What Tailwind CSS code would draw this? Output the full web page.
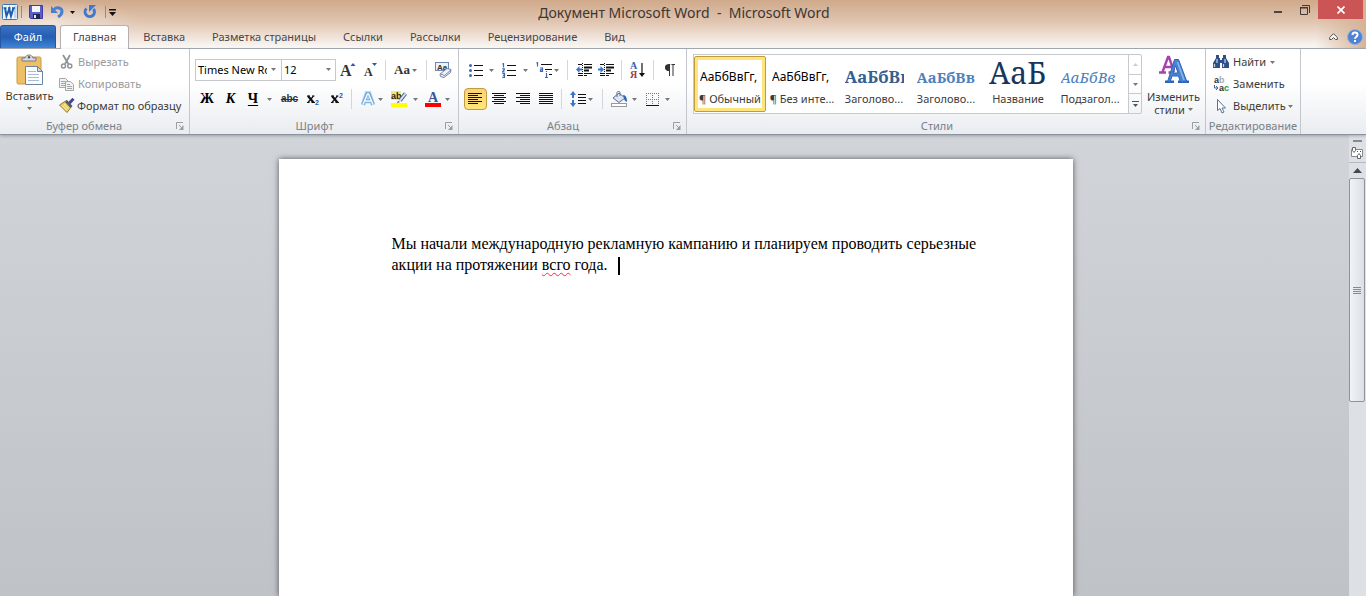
<!DOCTYPE html>
<html lang="ru">
<head>
<meta charset="utf-8">
<meta name="viewport" content="width=device-width, initial-scale=1">
<title>Документ Microsoft Word - Microsoft Word</title>
<script src="https://cdn.jsdelivr.net/npm/@tailwindcss/browser@4"></script>
</head>
<body class="flex h-screen flex-col overflow-hidden bg-[#c4c8cd] font-['Noto_Sans','Open_Sans',sans-serif] text-[11px] leading-4 text-[#3b3b3b]">

<svg class="hidden" aria-hidden="true">
  <symbol id="down" viewBox="0 0 5 3"><path d="M0 0h5L2.500 3z" fill="#777"/></symbol>
  <symbol id="launch" viewBox="0 0 8 8"><path d="M.5 7V.5H7M3 3l3 3" fill="none" stroke="#9a9da2"/><path d="M7.500 3v5H3l4.500-5z" fill="#9a9da2"/></symbol>
</svg>

<header class="shrink-0 border-b border-[#a9adb4] bg-[radial-gradient(ellipse_90px_22px_at_50px_22px,#ffffff80,#ffffff00),linear-gradient(to_left,#d5b397_0,#d5b39700_50px),linear-gradient(#cfa98a,#e0c5b0_45%,#fbf8f6)]">
  <div class="flex h-[25px] items-start">
    <div class="flex h-6 flex-1 items-center pl-0.5">
      <svg class="h-4 w-4" viewBox="0 0 16 16"><rect x=".5" y=".5" width="15" height="15" rx="1" fill="#eef5fc" stroke="#3b78b8"/><path d="M12 2h2.500v12H12z" fill="#b9d6f2"/><path d="M1.500 4h3M6 4h2.500M10 4h3" stroke="#1f5ba8" stroke-width="1.500"/><path d="M3 4l1.500 8L7.300 5l1.700 7L11.500 4" fill="none" stroke="#1f5ba8" stroke-width="2"/></svg>
      <span class="ml-[3px] h-3 w-px bg-[#9d8a7d]"></span>
      <button aria-label="Сохранить" class="ml-[7px]"><svg class="h-[14px] w-[14px]" viewBox="0 0 14 14"><path d="M.5.5h13v13h-12l-1-1z" fill="#5a5fc8" stroke="#3c3f9c"/><path d="M3 1h8v6H3z" fill="#f3f6ff"/><path d="M4 9h7v5H4z" fill="#23264f"/><path d="M5 10h2v3H5z" fill="#e8e8f4"/></svg></button>
      <button aria-label="Отменить" class="ml-2"><svg class="h-[14px] w-[14px]" viewBox="0 0 14 14"><path d="M3 4.500c3-3 8-1.500 8 2 0 2.500-1.500 4-4 5.500" fill="none" stroke="#4a7fd0" stroke-width="3"/><path d="M0 1v7h7z" fill="#4a7fd0"/></svg></button>
      <button aria-label="Список отмены" class="ml-[5px]"><svg class="h-[3px] w-[5px]" viewBox="0 0 5 3"><path d="M0 0h5L2.500 3z" fill="#111"/></svg></button>
      <button aria-label="Вернуть" class="ml-2"><svg class="h-[14px] w-[14px]" viewBox="0 0 14 14"><path d="M3.500 3.500a4.700 4.700 0 1 0 7 .5" fill="none" stroke="#3f78d2" stroke-width="3"/><path d="M6 0h7L6 7z" fill="#3f78d2"/></svg></button>
      <span class="ml-2 h-3 w-px bg-[#9d8a7d]"></span>
      <button aria-label="Настройка панели быстрого доступа" class="ml-[3px]"><svg class="h-[7px] w-[7px]" viewBox="0 0 7 7"><path d="M0 0h7v1.500H0zM0 3h7L3.500 7z" fill="#111"/></svg></button>
    </div>
    <h1 class="whitespace-pre pt-[3px] text-[14px] leading-5 text-[#3c3634]">Документ Microsoft Word  -  Microsoft Word</h1>
    <div class="flex flex-1 items-start justify-end">
      <button aria-label="Свернуть" class="flex h-5 w-[26px] items-center justify-center"><svg class="h-[14px] w-[8px]" viewBox="0 0 8 14"><path d="M0 8h8v2H0z" fill="#4a4542"/></svg></button>
      <button aria-label="Развернуть" class="flex h-[19px] w-[27px] items-center justify-center"><svg class="h-[10px] w-[10px]" viewBox="0 0 10 10"><path d="M2 .5h7.500V8M.5 2.500h7v7h-7z" fill="none" stroke="#3f3a38"/><path d="M0 2h8v1.500H0z" fill="#3f3a38"/></svg></button>
      <button aria-label="Закрыть" class="mr-[3px] flex h-[19px] w-[45px] items-center justify-center bg-[#cb5454]"><svg class="h-2 w-2" viewBox="0 0 8 8"><path d="M.5.5l7 7M7.500.5l-7 7" stroke="#fff" stroke-width="1.700"/></svg></button>
    </div>
  </div>
  <nav class="flex h-[23px] text-[#474747]">
    <button class="mr-1 w-14 rounded-t-[3px] border border-b-0 border-[#2458a4] bg-linear-to-b from-[#3a72c4] via-[#255db2] to-[#3f86d8] text-white">Файл</button>
    <button class="-mb-px h-6 rounded-t-[3px] border border-b-0 border-[#b5b0ae] bg-white px-3 pb-px">Главная</button>
    <button class="pr-[13px] pl-[14px]">Вставка</button>
    <button class="pr-[13px] pl-[14px]">Разметка страницы</button>
    <button class="pr-[13px] pl-[14px]">Ссылки</button>
    <button class="pr-[13px] pl-[14px]">Рассылки</button>
    <button class="pr-[13px] pl-[14px]">Рецензирование</button>
    <button class="pr-[13px] pl-[14px]">Вид</button>
    <div class="ml-auto flex items-center gap-[9px] pr-[3px]">
      <button aria-label="Свернуть ленту"><svg class="h-[7px] w-[9px]" viewBox="0 0 9 7"><path d="M4.500.7L8.300 4.500v2H6.500l-2-2-2 2H.7v-2z" fill="#fff" stroke="#4c4c4c"/></svg></button>
      <button aria-label="Справка"><svg class="h-4 w-4" viewBox="0 0 16 16"><circle cx="8" cy="8" r="7.500" fill="#4f83d4" stroke="#8fb0e2"/><path d="M5.500 6c0-3.200 5-3.200 5 0 0 1.700-2.500 1.700-2.500 3.800M8 11v2" fill="none" stroke="#fff" stroke-width="2"/></svg></button>
    </div>
  </nav>
</header>

<main class="contents">
<div class="z-10 flex h-[86px] shrink-0 border-b border-[#8b939d] bg-linear-to-b from-white from-40% to-[#e9ecf0] shadow-[0_1px_3px_#00000040]">

  <section class="flex w-[190px] shrink-0 flex-col border-r border-[#c3c7cd]">
    <div class="flex h-[70px] pt-[2px]">
      <button class="flex w-[59px] flex-col items-center pt-[3px]">
        <svg class="h-8 w-[28px]" viewBox="0 0 28 32"><rect x="1" y="3" width="24" height="27" rx="1.500" fill="#efbf68" stroke="#c99845"/><path d="M6 7V4h3c1-4 7-4 8 0h3v3z" fill="#d9dbdf" stroke="#777b82"/><circle cx="13" cy="3.200" r="1.200" fill="#555"/><path d="M9.500 12.500h12l5 5v13h-17z" fill="#fafcff" stroke="#6d83a3"/><path d="M21.500 12.500v5h5z" fill="#cbd9ec" stroke="#6d83a3"/><path d="M12 17.500h8M12 20.500h11M12 23.500h11M12 26.500h11" stroke="#a9bad2"/></svg>
        <span class="mt-[2px]">Вставить</span>
        <svg class="mt-[3px] h-[3px] w-[5px]"><use href="#down"/></svg>
      </button>
      <div class="flex flex-col">
        <button disabled class="flex h-[22px] items-center gap-[3px] text-[#9a9a9a]"><svg class="h-4 w-4" viewBox="0 0 16 16" fill="none" stroke="#8f9499"><path d="M4 1l5.500 9M11 1L6 10" stroke-width="1.800"/><circle cx="4.500" cy="12" r="2" stroke-width="1.500"/><circle cx="10.800" cy="12" r="2" stroke-width="1.500"/></svg>Вырезать</button>
        <button disabled class="flex h-[22px] items-center gap-[3px] text-[#9a9a9a]"><svg class="h-4 w-4" viewBox="0 0 16 16" fill="#f1f1f1" stroke="#a6a6a6"><path d="M.5 2.500h6l3 3v6h-9z"/><path d="M2 5.500h4M2 7.500h4M2 9.500h4"/><path d="M6.500 5.500h5l3 3v6h-8z"/><path d="M8 8.500h3M8 10.500h5M8 12.500h5"/></svg>Копировать</button>
        <button class="flex h-[22px] items-center gap-0.5 whitespace-nowrap"><svg class="h-4 w-4" viewBox="0 0 16 16"><path d="M14.500.8L10 5.500" stroke="#4a4690" stroke-width="3"/><path d="M.5 7l7-4.500 5 6L8 14.500z" fill="#e8cf62" stroke="#94792d"/><path d="M6 4l2-2 5.500 6-2 2z" fill="#555b6b"/><path d="M3 7.500l5 5M5 6l4.500 5" stroke="#fff4b4"/></svg>Формат по образцу</button>
      </div>
    </div>
    <div class="flex items-center text-[#7b7f86]"><h2 class="flex-1 pr-2 text-center">Буфер обмена</h2><button aria-label="Параметры буфера обмена" class="mr-[5px]"><svg class="h-2 w-2"><use href="#launch"/></svg></button></div>
  </section>

  <section class="flex w-[269px] shrink-0 flex-col border-r border-[#c3c7cd]">
    <div class="flex h-[70px] flex-col gap-[7px] pt-[10px] pl-[5px]">
      <div class="flex h-[22px] items-center">
        <div class="relative"><select aria-label="Шрифт" class="block h-[22px] w-[87px] appearance-none border border-[#c6c9ce] bg-white pr-[14px] pl-0.5 text-black"><option>Times New Roman</option></select><svg class="pointer-events-none absolute top-[9px] right-1.5 h-[3px] w-[5px]"><use href="#down"/></svg></div>
        <div class="relative -ml-px"><select aria-label="Размер шрифта" class="block h-[22px] w-[55px] appearance-none border border-[#c6c9ce] bg-white pr-[14px] pl-0.5 text-black"><option>12</option></select><svg class="pointer-events-none absolute top-[9px] right-[5px] h-[3px] w-[5px]"><use href="#down"/></svg></div>
        <button aria-label="Увеличить размер" class="flex h-[22px] w-6 items-center justify-center"><svg class="h-4 w-4" viewBox="0 0 16 16"><text x="0" y="14" font-family="Liberation Serif" font-weight="700" font-size="16" fill="#333">A</text><path d="M10.500 4h5L13 1z" fill="#2f56b0"/></svg></button>
        <button aria-label="Уменьшить размер" class="flex h-[22px] w-[22px] items-center justify-center"><svg class="h-4 w-4" viewBox="0 0 16 16"><text x="1" y="14" font-family="Liberation Serif" font-weight="700" font-size="12" fill="#333">A</text><path d="M9 1h5l-2.500 3z" fill="#2f56b0"/></svg></button>
        <span class="ml-[3px] h-5 w-px bg-[#d3d6da]"></span>
        <button aria-label="Регистр" class="ml-2 flex h-[22px] items-center gap-0.5 font-['Liberation_Serif',serif] text-[13px] font-bold text-[#333]">Aa<svg class="h-[3px] w-[5px]"><use href="#down"/></svg></button>
        <span class="ml-[9px] h-5 w-px bg-[#d3d6da]"></span>
        <button aria-label="Очистить формат" class="ml-2 flex h-[22px] items-center"><svg class="h-4 w-[17px]" viewBox="0 0 17 16"><rect x=".5" y=".5" width="13" height="8" fill="#edf3fb" stroke="#6f86b0"/><text x="2" y="7.500" font-family="Liberation Sans" font-weight="700" font-size="8" fill="#333">Aa</text><path d="M5 12l7-5.500 4 1-.500 3L9 15.500l-3.500-1z" fill="#eef1f7" stroke="#7483a5"/><path d="M6 12l3.500 1.500L16 8" fill="none" stroke="#7483a5"/></svg></button>
      </div>
      <div class="flex h-[22px] items-center font-['Liberation_Serif',serif] text-[14px] font-bold text-black">
        <button aria-label="Полужирный" class="h-[22px] w-6">Ж</button>
        <button aria-label="Курсив" class="h-[22px] w-[23px] italic">К</button>
        <button aria-label="Подчеркнутый" class="flex h-[22px] w-[36px] items-center justify-center gap-[9px]"><span class="underline underline-offset-2">Ч</span><svg class="h-[3px] w-[5px]"><use href="#down"/></svg></button>
        <button aria-label="Зачеркнутый" class="h-[22px] w-[23px] font-['Liberation_Sans',sans-serif] text-[10px] font-bold text-[#333] line-through">abc</button>
        <button aria-label="Подстрочный" class="flex h-[22px] w-6 items-center justify-center"><svg class="h-[14px] w-[14px]" viewBox="0 0 14 14"><path d="M1 4h3M6 4h2.500M1 10.500h2.500M5.500 10.500h3.500" stroke="#111" stroke-width="1.200"/><path d="M2 4l5.500 6.500" stroke="#111" stroke-width="2.200"/><path d="M7.500 4L2 10.500" stroke="#111" stroke-width="1.200"/><text x="9" y="13" font-family="Liberation Sans" font-size="7" font-weight="700" fill="#2f56b0">2</text></svg></button>
        <button aria-label="Надстрочный" class="flex h-[22px] w-[23px] items-center justify-center"><svg class="h-[14px] w-[14px]" viewBox="0 0 14 14"><path d="M1 4h3M6 4h2.500M1 10.500h2.500M5.500 10.500h3.500" stroke="#111" stroke-width="1.200"/><path d="M2 4l5.500 6.500" stroke="#111" stroke-width="2.200"/><path d="M7.500 4L2 10.500" stroke="#111" stroke-width="1.200"/><text x="9" y="6" font-family="Liberation Sans" font-size="7" font-weight="700" fill="#2f56b0">2</text></svg></button>
        <span class="ml-[3px] h-5 w-px bg-[#d3d6da]"></span>
        <button aria-label="Текстовые эффекты" class="ml-2 flex h-[22px] items-center gap-0.5"><svg class="h-4 w-4" viewBox="0 0 16 16"><path d="M3 14L7 2.500h2L13 14M5 10h6" fill="none" stroke="#b9dcf5" stroke-width="5"/><path d="M3 13.500L7 3h2l4 10.500M5 10h6" fill="none" stroke="#6ea6da" stroke-width="3.400"/><path d="M3 13.500L7.500 3h1L13 13.500M5 10h6" fill="none" stroke="#f3f9ff" stroke-width="1.500"/></svg><svg class="h-[3px] w-[5px]"><use href="#down"/></svg></button>
        <button aria-label="Цвет выделения" class="ml-2 flex h-[22px] items-center gap-1.5"><svg class="h-4 w-4" viewBox="0 0 16 16"><path d="M0 0h10v9H0z" fill="#f2ea71"/><text x="0" y="8" font-family="Liberation Sans" font-size="9" font-weight="700" fill="#222">ab</text><path d="M14.500 2.500L9 9.500" stroke="#536b95" stroke-width="4"/><path d="M14.500 2.500L9 9.500" stroke="#d8e3f2" stroke-width="2"/><path d="M9 11l-2-1-1 2z" fill="#444"/><path d="M0 12h16v4H0z" fill="#ff0"/></svg><svg class="h-[3px] w-[5px]"><use href="#down"/></svg></button>
        <button aria-label="Цвет текста" class="ml-[7px] flex h-[22px] items-center gap-1"><svg class="h-4 w-4" viewBox="0 0 16 16"><text x="3" y="11" font-family="Liberation Serif" font-size="14" font-weight="700" fill="#34549c">A</text><path d="M0 12h16v4H0z" fill="#f00"/></svg><svg class="h-[3px] w-[5px]"><use href="#down"/></svg></button>
      </div>
    </div>
    <div class="flex items-center text-[#7b7f86]"><h2 class="flex-1 pr-[6px] text-center">Шрифт</h2><button aria-label="Параметры шрифта" class="mr-[5px]"><svg class="h-2 w-2"><use href="#launch"/></svg></button></div>
  </section>

  <section class="flex w-[228px] shrink-0 flex-col border-r border-[#c3c7cd]">
    <div class="flex h-[70px] flex-col gap-[7px] pt-[10px] pl-[5px]">
      <div class="flex h-[22px] items-center">
        <button aria-label="Маркеры" class="ml-[5px] flex h-[22px] items-center gap-1.5"><svg class="h-[14px] w-[14px]" viewBox="0 0 14 14"><path d="M5 2.500h9M5 7.500h9M5 12.500h9" stroke="#111"/><g fill="#3c66b4"><circle cx="1.500" cy="2.500" r="1.500"/><circle cx="1.500" cy="7.500" r="1.500"/><circle cx="1.500" cy="12.500" r="1.500"/></g></svg><svg class="h-[3px] w-[5px]"><use href="#down"/></svg></button>
        <button aria-label="Нумерация" class="ml-2 flex h-[22px] items-center gap-[7px]"><svg class="h-[15px] w-[14px]" viewBox="0 0 14 15"><path d="M5 2.500h9M5 7.500h9M5 12.500h9" stroke="#111"/><g fill="none" stroke="#3c66b4" stroke-width="1.200"><path d="M.5 1.200l1-.700v4M.3 5.800h2v1L.3 9h2.500M.3 10.600h2.200v3.800H.3M1 12.500h1.500"/></g></svg><svg class="h-[3px] w-[5px]"><use href="#down"/></svg></button>
        <button aria-label="Многоуровневый список" class="ml-2 flex h-[22px] items-center gap-0.5"><svg class="h-4 w-4" viewBox="0 0 16 16"><path d="M5 2.500h11M9 7.500h7M13 12.500h3" stroke="#111"/><g fill="none" stroke="#3c66b4" stroke-width="1.200"><path d="M.5 1.200l1-.7v4M4 6h2.500v3.500h-2V7.800h2M10.500 11v4.500M9 15.500h3M10.500 9v1"/></g></svg><svg class="h-[3px] w-[5px]"><use href="#down"/></svg></button>
        <span class="ml-2 h-5 w-px bg-[#d3d6da]"></span>
        <button aria-label="Уменьшить отступ" class="ml-2 flex h-[22px] items-center"><svg class="h-[14px] w-4" viewBox="0 0 16 14"><path d="M2 1.500h4M8 1.500h8M2 10.500h4M8 10.500h8M2 12.500h4M8 12.500h3" stroke="#111"/><path d="M8 4.500h8M8 7.500h5" stroke="#111" stroke-width="2"/><path d="M6.500 0v14" stroke="#111" stroke-dasharray="1 1"/><path d="M0 6.500L3.500 3v2.500H6v2H3.500V10z" fill="#3c74cc"/></svg></button>
        <button aria-label="Увеличить отступ" class="ml-1.5 flex h-[22px] items-center"><svg class="h-[14px] w-4" viewBox="0 0 16 14"><path d="M2 1.500h4M8 1.500h8M2 10.500h4M8 10.500h8M2 12.500h4M8 12.500h3" stroke="#111"/><path d="M8 4.500h8M8 7.500h5" stroke="#111" stroke-width="2"/><path d="M6.500 0v14" stroke="#111" stroke-dasharray="1 1"/><path d="M6 6.500L2.500 3v2.500H0v2h2.500V10z" fill="#3c74cc"/></svg></button>
        <span class="ml-[7px] h-5 w-px bg-[#d3d6da]"></span>
        <button aria-label="Сортировка" class="ml-2 flex h-[22px] items-center"><svg class="h-[18px] w-[15px]" viewBox="0 0 15 18"><text x="0" y="8" font-family="Liberation Serif" font-size="10" font-weight="700" fill="#3c5ca8">А</text><text x="0" y="17" font-family="Liberation Serif" font-size="10" font-weight="700" fill="#a13d3d">Я</text><path d="M12 2v10" stroke="#111" stroke-width="1.200"/><path d="M9 12h6l-3 4z" fill="#111"/></svg></button>
        <span class="ml-2 h-5 w-px bg-[#d3d6da]"></span>
        <button aria-label="Отобразить все знаки" class="ml-[11px] flex h-[22px] items-center"><svg class="h-3 w-[10px]" viewBox="0 0 10 12"><path d="M5 0v12H4V7C-1.500 7-1.500 0 4 0h6v1H8.500v11h-1V1z" fill="#333"/></svg></button>
      </div>
      <div class="flex h-[22px] items-center">
        <button aria-label="По левому краю" aria-pressed="true" class="flex h-[22px] w-[23px] items-center justify-center rounded-sm border border-[#c29b3c] bg-linear-to-b from-[#fbd277] to-[#ffe67a]"><svg class="h-3 w-[15px]" viewBox="0 0 15 12"><path d="M0 .5h14M0 2.500h10M0 4.500h14M0 6.500h10M0 8.500h14M0 10.500h10" stroke="#111"/></svg></button>
        <button aria-label="По центру" class="flex h-[22px] w-6 items-center justify-center"><svg class="h-3 w-[14px]" viewBox="0 0 14 12"><path d="M0 .5h14M2 2.500h10M0 4.500h14M2 6.500h10M0 8.500h14M2 10.500h10" stroke="#111"/></svg></button>
        <button aria-label="По правому краю" class="flex h-[22px] w-6 items-center justify-center"><svg class="h-3 w-[14px]" viewBox="0 0 14 12"><path d="M0 .5h14M4 2.500h10M0 4.500h14M4 6.500h10M0 8.500h14M4 10.500h10" stroke="#111"/></svg></button>
        <button aria-label="По ширине" class="flex h-[22px] w-[22px] items-center justify-center"><svg class="h-3 w-[14px]" viewBox="0 0 14 12"><path d="M0 .5h14M0 2.500h14M0 4.500h14M0 6.500h14M0 8.500h14M0 10.500h14" stroke="#111"/></svg></button>
        <span class="ml-1 h-5 w-px bg-[#d3d6da]"></span>
        <button aria-label="Интервал" class="ml-2 flex h-[22px] items-center gap-0.5"><svg class="h-4 w-4" viewBox="0 0 16 16"><path d="M8 3.500h8M8 6.500h8M8 9.500h8M8 12.500h8" stroke="#111"/><path d="M3 0l3 4H4v3H2V4H0zM3 16l3-4H4V9H2v3H0z" fill="#3c74cc"/></svg><svg class="h-[3px] w-[5px]"><use href="#down"/></svg></button>
        <span class="ml-[9px] h-5 w-px bg-[#d3d6da]"></span>
        <button aria-label="Заливка" class="ml-2 flex h-[22px] items-center gap-1"><svg class="h-4 w-[17px]" viewBox="0 0 17 16"><path d="M2 7l6-5 6 5-6 4.500z" fill="#dbe6f5" stroke="#5b6f93"/><path d="M6 6V1.500c0-1.500 3-1.500 3 0V5" fill="none" stroke="#5b6f93"/><path d="M12 4c3 0 4 3 4 7-2-1-3-2-3-4z" fill="#2f62b4"/><rect x=".5" y="12.500" width="15" height="3" fill="#fff" stroke="#999"/></svg><svg class="h-[3px] w-[5px]"><use href="#down"/></svg></button>
        <button aria-label="Границы" class="ml-[9px] flex h-[22px] items-center gap-1.5"><svg class="h-[13px] w-[13px]" viewBox="0 0 13 13"><path d="M0 .5h13M0 6.500h13M.5 0v13M6.500 0v13M12.500 0v13" stroke="#777" stroke-dasharray="1 1"/><path d="M0 12.500h13" stroke="#111"/></svg><svg class="h-[3px] w-[5px]"><use href="#down"/></svg></button>
      </div>
    </div>
    <div class="flex items-center text-[#7b7f86]"><h2 class="flex-1 pr-[6px] text-center">Абзац</h2><button aria-label="Параметры абзаца" class="mr-[5px]"><svg class="h-2 w-2"><use href="#launch"/></svg></button></div>
  </section>

  <section class="flex w-[519px] shrink-0 flex-col border-r border-[#c3c7cd]">
    <div class="flex h-[70px] items-start pt-[5px] pl-[6px]">
      <div class="flex h-[60px] w-[436px] border border-[#c6c9ce] bg-white py-px">
        <button class="flex w-[72px] shrink-0 flex-col items-center rounded-xs border border-[#c29b3c] bg-white px-0.5 pt-2.5 ring-3 ring-[#fde57c] ring-inset"><span class="h-6 w-[60px] overflow-hidden text-left text-[12px] leading-5 whitespace-nowrap text-black">АаБбВвГг,</span><span class="whitespace-nowrap">¶ Обычный</span></button>
        <button class="flex w-[72px] shrink-0 flex-col items-center pt-[11px]"><span class="h-6 w-[60px] overflow-hidden text-left text-[12px] leading-5 whitespace-nowrap text-black">АаБбВвГг,</span><span class="whitespace-nowrap">¶ Без инте...</span></button>
        <button class="flex w-[72px] shrink-0 flex-col items-center pt-[11px]"><span class="h-6 w-[59px] overflow-hidden text-left font-['Noto_Serif','DejaVu_Serif',serif] text-[17px] leading-5 font-bold whitespace-nowrap text-[#365f91]">АаБбВв</span><span class="whitespace-nowrap">Заголово...</span></button>
        <button class="flex w-[72px] shrink-0 flex-col items-center pt-[11px]"><span class="h-6 w-[59px] overflow-hidden text-left font-['Noto_Serif','DejaVu_Serif',serif] text-[15px] leading-5 font-bold whitespace-nowrap text-[#4f81bd]">АаБбВв</span><span class="whitespace-nowrap">Заголово...</span></button>
        <button class="flex w-[72px] shrink-0 flex-col items-center"><span class="h-[35px] w-[58px] overflow-hidden text-left font-['Noto_Serif','Liberation_Serif',serif] text-[30px] leading-[34px] whitespace-nowrap text-[#17365d]">АаБ</span><span class="whitespace-nowrap">Название</span></button>
        <button class="flex w-[72px] shrink-0 flex-col items-center pt-[11px]"><span class="h-6 w-[59px] overflow-hidden text-left font-['Noto_Serif','Liberation_Serif',serif] text-[15px] leading-5 whitespace-nowrap text-[#4f81bd] italic">АаБбВв</span><span class="whitespace-nowrap">Подзагол...</span></button>
      </div>
      <div class="-ml-px flex h-[60px] w-[14px] flex-col divide-y divide-[#c6c9ce] rounded-r-xs border border-[#c6c9ce]">
        <button disabled aria-label="Вверх" class="flex flex-1 items-center justify-center"><svg class="h-[3px] w-[5px]" viewBox="0 0 5 3"><path d="M0 3h5L2.500 0z" fill="#ccc"/></svg></button>
        <button aria-label="Вниз" class="flex flex-1 items-center justify-center"><svg class="h-[3px] w-[5px]"><use href="#down"/></svg></button>
        <button aria-label="Дополнительно" class="flex flex-1 items-center justify-center"><svg class="h-[6px] w-[7px]" viewBox="0 0 7 6"><path d="M0 0h7v1H0zM1 3h5L3.500 6z" fill="#555"/></svg></button>
      </div>
      <button class="flex flex-1 flex-col items-center leading-[13px]">
        <svg class="h-[30px] w-[30px]" viewBox="0 0 30 30"><path d="M0 18.500h7M9.500 18.500h5M3.500 18L9 3h1l5 15M6 13h7" fill="none" stroke="#a743ab" stroke-width="2.400"/><path d="M6 27.800h9M19 27.800h11" stroke="#2d62b5" stroke-width="2.400"/><path d="M15.500 5.500h4L28 28h-6.500l-2-6H13l-2 6H8.500zM16.500 11.500L14 19h5z" fill="#4a84d4" fill-rule="evenodd" stroke="#2d62b5"/><path d="M18.500 8L25 26" stroke="#8db8ef" stroke-width="1.500"/></svg>
        <span class="mt-[6px]">Изменить</span>
        <span class="flex items-center gap-[3px]">стили<svg class="h-[3px] w-[5px]"><use href="#down"/></svg></span>
      </button>
    </div>
    <div class="flex items-center text-[#7b7f86]"><h2 class="flex-1 pr-[5px] text-center">Стили</h2><button aria-label="Параметры стилей" class="mr-[5px]"><svg class="h-2 w-2"><use href="#launch"/></svg></button></div>
  </section>

  <section class="flex w-[95px] shrink-0 flex-col border-r border-[#c3c7cd]">
    <div class="flex h-[70px] flex-col pt-[2px] pl-[7px]">
      <button class="flex h-[22px] items-center gap-1"><svg class="h-[14px] w-4" viewBox="0 0 16 14"><path d="M3 0h3v3h1v2h2V3h1V0h3v3l3 5v5H9V8H7v5H0V8l3-5z" fill="#2f4f87"/><path d="M4 4v4M1.500 9v3M12 4v4M10.500 9v3" stroke="#b9cdec" stroke-width="1.300"/></svg>Найти<svg class="h-[3px] w-[5px]"><use href="#down"/></svg></button>
      <button class="flex h-[22px] items-center gap-1"><svg class="h-4 w-4" viewBox="0 0 16 16"><g font-family="Liberation Sans" font-weight="700" font-size="9"><text x="1" y="7" fill="#333">a</text><text x="6" y="7" fill="#aaa">b</text><text x="6" y="15" fill="#333">a</text><text x="11" y="15" fill="#2a9140">c</text></g><path d="M1.500 9v3H4M3 10l2 2-2 2" fill="none" stroke="#3d62a8"/></svg>Заменить</button>
      <button class="flex h-[22px] items-center gap-1"><svg class="h-4 w-4" viewBox="0 0 16 16"><path d="M4.500 1.500v11l2.500-2 2 4.500 2-1-2-4h3.500z" fill="#fff" stroke="#5c7196"/></svg>Выделить<svg class="-ml-0.5 h-[3px] w-[5px]"><use href="#down"/></svg></button>
    </div>
    <h2 class="text-center text-[#7b7f86]">Редактирование</h2>
  </section>
</div>

<div class="flex min-h-0 flex-1 bg-linear-to-b from-[#d1d5da] to-[#bfc2c7]">
  <div class="flex min-w-0 flex-1 overflow-hidden pt-6 pl-0.5">
    <article contenteditable="true" spellcheck="false" class="mx-auto w-[794px] bg-white px-[113px] pt-[74px] font-['Liberation_Serif',serif] text-[16px] leading-[21px] text-black shadow-[0_0_6px_#00000099] outline-none">
      <p class="whitespace-nowrap">Мы начали международную рекламную кампанию и планируем проводить серьезные<br>акции на протяжении <span class="underline decoration-red-500 decoration-wavy decoration-1 underline-offset-2">всго</span> года.<span class="ml-2.5 inline-block h-[18px] w-0.5 bg-black align-middle"></span></p>
    </article>
  </div>
  <aside class="flex w-[17px] flex-col bg-[#dde1e6]">
    <button aria-label="Разделить окно" class="mt-[5px] ml-1 h-0.5 w-[9px] bg-[#868b92]"></button>
    <button aria-label="Линейка" class="mt-1 ml-0.5 h-[14px] w-3"><svg class="h-3 w-3" viewBox="0 0 12 12"><path d="M.5 2.500h11v7H.5z" fill="#fff" stroke="#848a92"/><path d="M1.500.5h3v3l-1.500 2-1.500-2zM6.500 8.500l1.500-2 1.500 2v3h-3z" fill="#fff" stroke="#666"/><path d="M6 4.500h1M9 4.500h1" stroke="#555"/></svg></button>
    <button aria-label="Прокрутить вверх" class="mt-0.5 flex h-[16px] w-full items-center justify-center border-t border-[#b4bac2]"><svg class="h-[5px] w-[9px]" viewBox="0 0 9 5"><path d="M0 5h9L4.500 0z" fill="#444a52"/></svg></button>
    <button aria-label="Ползунок прокрутки" class="flex h-[224px] w-4 flex-col items-center justify-center gap-px rounded-xs border border-[#8d949d] bg-linear-to-r from-[#f0f4f8] to-[#dcdfe5]"><span class="h-px w-2 bg-[#868b92]"></span><span class="h-px w-2 bg-[#868b92]"></span><span class="h-px w-2 bg-[#868b92]"></span><span class="h-px w-2 bg-[#868b92]"></span></button>
  </aside>
</div>
</main>
</body>
</html>
